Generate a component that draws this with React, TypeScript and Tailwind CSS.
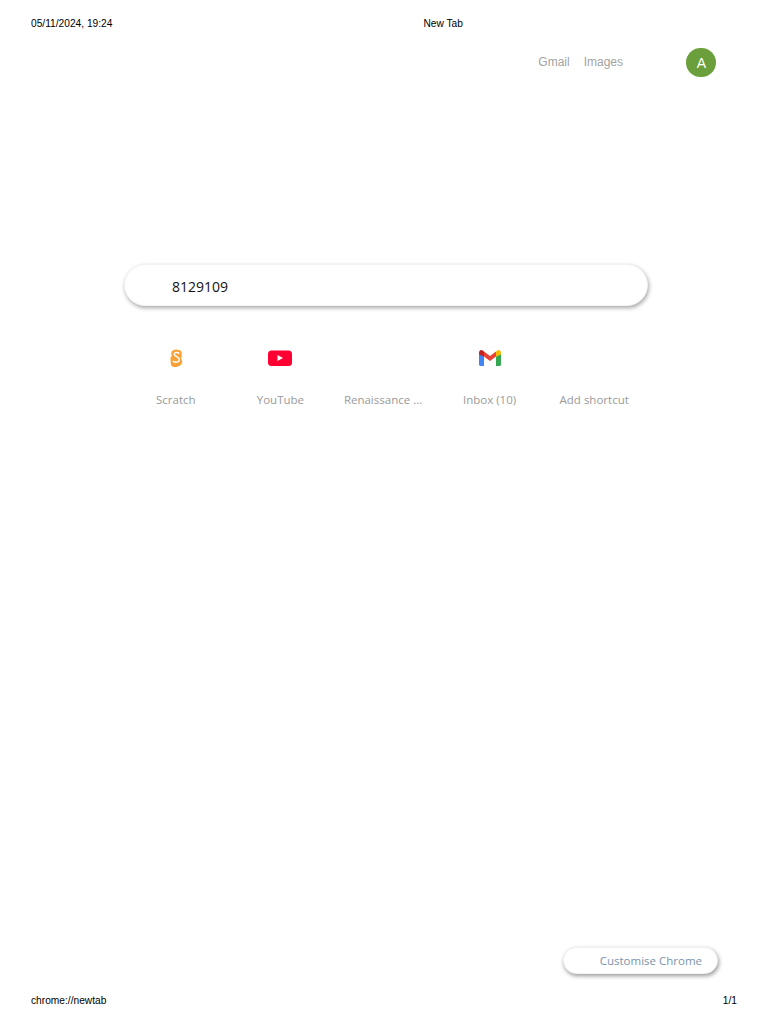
const shortcuts = [
  { label: 'Scratch', icon: <ScratchIcon />, nudge: '' },
  { label: 'YouTube', icon: <YouTubeIcon />, nudge: '' },
  { label: 'Renaissance …', icon: null, nudge: 'mr-[4px]' },
  { label: 'Inbox (10)', icon: <GmailIcon />, nudge: '' },
  { label: 'Add shortcut', icon: null, nudge: '' },
];

function ScratchIcon() {
  return (
    <svg width="14" height="20" viewBox="0 0 14 20" fill="none">
      <path
        d="M10.300 2.200C8 .8 3.400 1.200 2.400 4c-.6 1.700 0 3.100 1 4-1.100.1-2 .8-1.900 2.200l.3 5.300c.2 2.300 1.700 3.700 3.900 3.500 3-.2 7-1.300 7.400-4.800.2-1.700-.4-3-1.300-3.900.7-.5 1.100-1.300 1-2.300l-.1-3.200c-.1-1.300-.7-1.900-1.700-2.600z"
        fill="#f9a136"
      />
      <path
        d="M9.800 5.200C8.300 4 5.300 4.400 5.200 6.200c-.1 2.300 5.300 2.800 5.200 5.500-.1 2.700-4 3.200-6 1.600"
        stroke="#fff"
        strokeWidth="1.500"
        strokeLinecap="round"
      />
    </svg>
  );
}

function YouTubeIcon() {
  return (
    <svg width="24" height="16" viewBox="0 0 24 16">
      <rect x="0" y="0.500" width="24" height="15.500" rx="3.500" fill="#ff0033" />
      <path d="M9.500 5v6l5.500-3z" fill="#fff" />
    </svg>
  );
}

function GmailIcon() {
  return (
    <svg width="22" height="16" viewBox="0 0 22 16">
      <path d="M0 3v11.500C0 15.300.7 16 1.500 16H5V6.500z" fill="#4285f4" />
      <path d="M17 6.500V16h3.500c.8 0 1.500-.7 1.500-1.500V3z" fill="#34a853" />
      <path d="M5 6.500 11 11l6-4.500V1.500L11 6 5 1.500z" fill="#ea4335" />
      <path d="M0 3v1.500l5 2v-5L3.500.5C2-.6 0 .5 0 3z" fill="#c5221f" />
      <path d="M17 1.500v5l5-2V3c0-2.500-2-3.600-3.500-2.500z" fill="#fbbc04" />
    </svg>
  );
}

export default function App() {
  return (
    <div className="flex h-[1024px] flex-col bg-white font-['Liberation_Sans',sans-serif]">
      {/* print header */}
      <div className="mt-[15px] flex h-[17px] items-center px-[31px] pt-[1px] text-[10.200px] text-black">
        <span>05/11/2024, 19:24</span>
        <span className="ml-[311px]">New Tab</span>
      </div>

      {/* top links */}
      <div className="mt-[15px] flex h-[30px] items-center justify-end pr-[52px]">
        <span className="text-[12px] text-[#a3a3a3]">Gmail</span>
        <span className="ml-[14px] text-[12px] text-[#a3a3a3]">Images</span>
        <div className="ml-[63px] flex h-[29px] w-[30px] items-center justify-center rounded-full bg-[#6a9f3b] pl-[1px] pt-[3px] text-[14px] text-white">
          A
        </div>
      </div>

      {/* search */}
      <div className="mt-[187px] pl-[124px]">
        <div className="flex h-[42px] w-[524px] items-center rounded-full border border-[#f2f2f2] bg-white pl-[47px] pt-[3px] font-['Open_Sans',sans-serif] text-[14px] text-[#111] shadow-[1px_2px_4px_rgba(0,0,0,0.35)]">
          8129109
        </div>
      </div>

      {/* shortcuts */}
      <div className="ml-[123.500px] mt-[40px] grid w-[523px] grid-cols-5 font-['Open_Sans',sans-serif] text-[11.500px] text-[#9a9a9a]">
        {shortcuts.map((s) => (
          <div key={s.label} className="flex flex-col items-center">
            <div className="flex h-[24px] items-center justify-center">{s.icon}</div>
            <div className={`mt-[21px] whitespace-nowrap ${s.nudge}`}>{s.label}</div>
          </div>
        ))}
      </div>

      <div className="flex-1" />

      {/* customise */}
      <div className="flex justify-end pr-[50px]">
        <div className="flex h-[27px] w-[155px] items-center justify-end rounded-full border border-[#f2f2f2] bg-white pr-[15px] font-['Open_Sans',sans-serif] text-[11.500px] text-[#7b94ab] shadow-[1px_2px_4px_rgba(0,0,0,0.4)]">
          Customise Chrome
        </div>
      </div>

      {/* print footer */}
      <div className="mb-[15px] mt-[18px] flex h-[17px] items-center justify-between px-[31px] text-[10.200px] text-black">
        <span>chrome://newtab</span>
        <span>1/1</span>
      </div>
    </div>
  );
}
